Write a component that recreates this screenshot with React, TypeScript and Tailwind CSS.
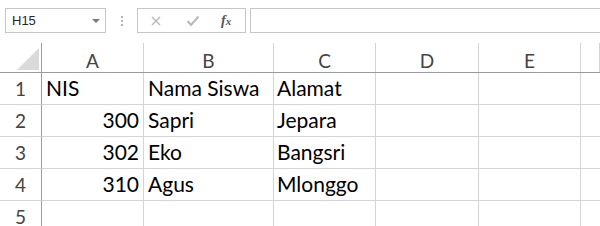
import React from 'react'

const COLS = ['A', 'B', 'C', 'D', 'E', '']

const ROWS: { n: number; a: string; b: string; c: string; num?: boolean }[] = [
  { n: 1, a: 'NIS', b: 'Nama Siswa', c: 'Alamat' },
  { n: 2, a: '300', b: 'Sapri', c: 'Jepara', num: true },
  { n: 3, a: '302', b: 'Eko', c: 'Bangsri', num: true },
  { n: 4, a: '310', b: 'Agus', c: 'Mlonggo', num: true },
  { n: 5, a: '', b: '', c: '' },
]

const gridCols = 'grid grid-cols-[42px_102px_130px_102px_103px_102px_1fr]'

export default function App() {
  return (
    <div className="w-[600px] h-[226px] overflow-hidden bg-white font-['Lato','Liberation_Sans',sans-serif] text-black">
      {/* formula bar */}
      <div className="h-[43px] flex items-start pt-[8px] pl-[5px]">
        <div className="w-[101px] h-[25px] border border-[#c6c6c6] flex items-center justify-between pl-[6px] pr-[5px] text-[13px] text-[#262626] font-['Liberation_Sans',sans-serif]">
          <span>H15</span>
          <span className="w-0 h-0 border-l-[4px] border-r-[4px] border-t-[4px] border-l-transparent border-r-transparent border-t-[#7a7a7a]" />
        </div>
        <div className="w-[31px] h-[25px] flex flex-col items-center justify-center gap-[2px]">
          <span className="w-[2px] h-[2px] bg-[#b4b4b4]" />
          <span className="w-[2px] h-[2px] bg-[#b4b4b4]" />
          <span className="w-[2px] h-[2px] bg-[#b4b4b4]" />
        </div>
        <div className="w-[109px] h-[25px] border border-[#c6c6c6] flex items-center">
          <svg width="12" height="12" viewBox="0 0 12 12" className="ml-[12px]">
            <path d="M2 2 L10 10 M10 2 L2 10" stroke="#b9b9b9" strokeWidth="1.4" />
          </svg>
          <svg width="14" height="12" viewBox="0 0 14 12" className="ml-[24px]">
            <path d="M1.5 6 L5 10 L12.5 1.5" stroke="#b9b9b9" strokeWidth="2" fill="none" />
          </svg>
          <span className="ml-[21px] text-[14px] italic font-bold text-[#555] font-['Liberation_Serif',serif] leading-none">
            f<span className="text-[11px]">x</span>
          </span>
        </div>
        <div className="ml-[4px] flex-1 h-[25px] border border-[#c6c6c6] border-r-0" />
      </div>

      {/* header row */}
      <div className={`${gridCols} h-[30px] border-b border-[#9b9b9b] text-[#444] text-[19px]`}>
        <div className="relative border-r border-[#9b9b9b]">
          <svg width="22" height="22" viewBox="0 0 22 22" className="absolute left-[17px] top-[5px]">
            <path d="M22 0 L22 22 L0 22 Z" fill="#dadada" />
          </svg>
        </div>
        {COLS.map((c, i) => (
          <div key={i} className="border-r border-[#d4d4d4] flex items-end justify-center pb-[2px] leading-none">
            {c}
          </div>
        ))}
      </div>

      {/* body */}
      {ROWS.map((r) => (
        <div key={r.n} className={`${gridCols} h-[32px] text-[21px]`}>
          <div className="border-r border-b border-r-[#9b9b9b] border-b-[#d4d4d4] flex items-end justify-center pb-[6px] leading-none text-[#444] text-[19px]">
            {r.n}
          </div>
          <div className={`border-r border-b border-[#d4d4d4] flex items-end pb-[6px] leading-none whitespace-nowrap ${r.num ? 'justify-end pr-[4px]' : 'pl-[4px]'}`}>
            {r.a}
          </div>
          <div className="border-r border-b border-[#d4d4d4] flex items-end pb-[6px] pl-[4px] leading-none whitespace-nowrap">
            {r.b}
          </div>
          <div className="border-r border-b border-[#d4d4d4] flex items-end pb-[6px] pl-[3px] leading-none whitespace-nowrap">
            {r.c}
          </div>
          <div className="border-r border-b border-[#d4d4d4]" />
          <div className="border-r border-b border-[#d4d4d4]" />
          <div className="border-b border-[#d4d4d4]" />
        </div>
      ))}
    </div>
  )
}
